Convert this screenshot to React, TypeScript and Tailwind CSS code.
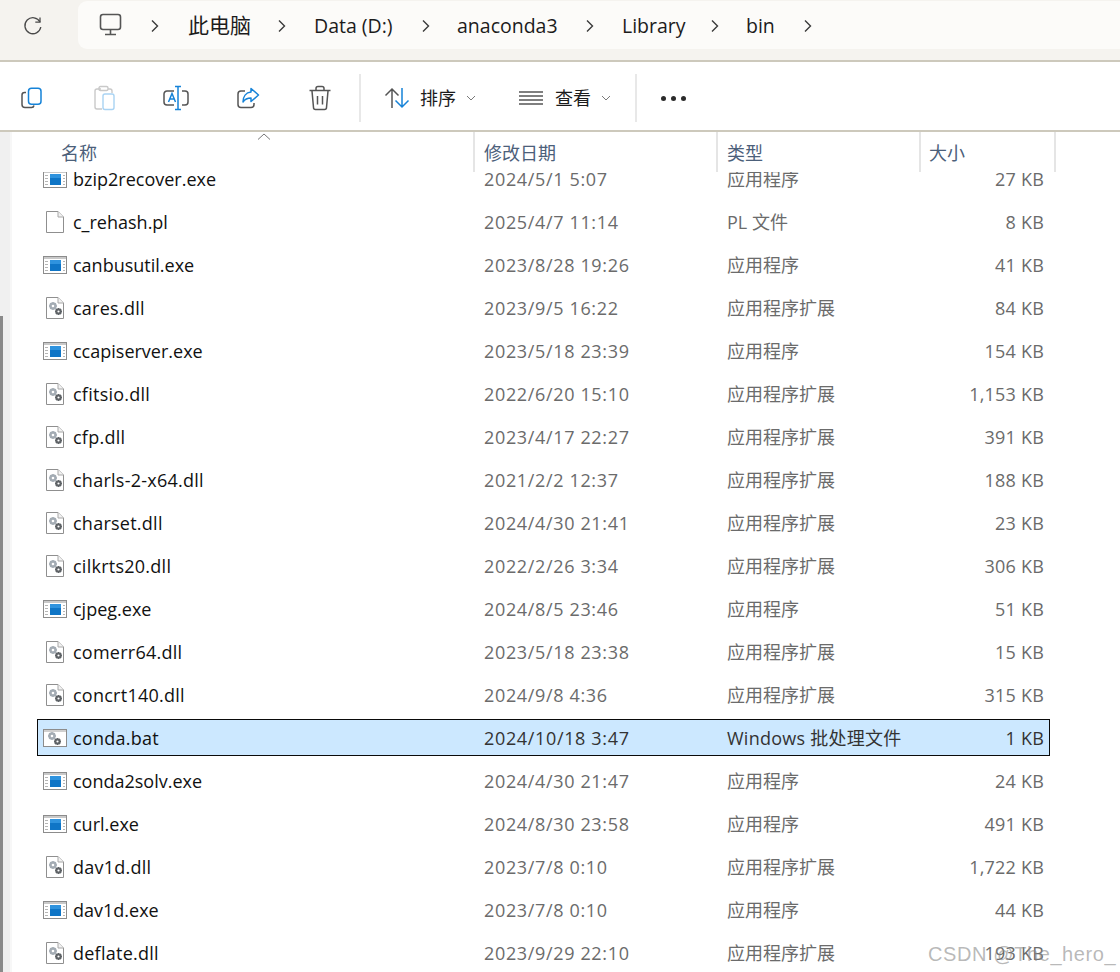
import type { ReactNode } from "react";

const FONT = "font-['Open_Sans','Noto_Sans_CJK_SC',sans-serif]";

type Kind = "exe" | "dll" | "file" | "bat";

interface Row {
  name: string;
  date: string;
  type: string;
  size: string;
  kind: Kind;
}

const EXE = "应用程序";
const DLL = "应用程序扩展";

const rows: Row[] = [
  { name: "bzip2recover.exe", date: "2024/5/1 5:07", type: EXE, size: "27 KB", kind: "exe" },
  { name: "c_rehash.pl", date: "2025/4/7 11:14", type: "PL 文件", size: "8 KB", kind: "file" },
  { name: "canbusutil.exe", date: "2023/8/28 19:26", type: EXE, size: "41 KB", kind: "exe" },
  { name: "cares.dll", date: "2023/9/5 16:22", type: DLL, size: "84 KB", kind: "dll" },
  { name: "ccapiserver.exe", date: "2023/5/18 23:39", type: EXE, size: "154 KB", kind: "exe" },
  { name: "cfitsio.dll", date: "2022/6/20 15:10", type: DLL, size: "1,153 KB", kind: "dll" },
  { name: "cfp.dll", date: "2023/4/17 22:27", type: DLL, size: "391 KB", kind: "dll" },
  { name: "charls-2-x64.dll", date: "2021/2/2 12:37", type: DLL, size: "188 KB", kind: "dll" },
  { name: "charset.dll", date: "2024/4/30 21:41", type: DLL, size: "23 KB", kind: "dll" },
  { name: "cilkrts20.dll", date: "2022/2/26 3:34", type: DLL, size: "306 KB", kind: "dll" },
  { name: "cjpeg.exe", date: "2024/8/5 23:46", type: EXE, size: "51 KB", kind: "exe" },
  { name: "comerr64.dll", date: "2023/5/18 23:38", type: DLL, size: "15 KB", kind: "dll" },
  { name: "concrt140.dll", date: "2024/9/8 4:36", type: DLL, size: "315 KB", kind: "dll" },
  { name: "conda.bat", date: "2024/10/18 3:47", type: "Windows 批处理文件", size: "1 KB", kind: "bat" },
  { name: "conda2solv.exe", date: "2024/4/30 21:47", type: EXE, size: "24 KB", kind: "exe" },
  { name: "curl.exe", date: "2024/8/30 23:58", type: EXE, size: "491 KB", kind: "exe" },
  { name: "dav1d.dll", date: "2023/7/8 0:10", type: DLL, size: "1,722 KB", kind: "dll" },
  { name: "dav1d.exe", date: "2023/7/8 0:10", type: EXE, size: "44 KB", kind: "exe" },
  { name: "deflate.dll", date: "2023/9/29 22:10", type: DLL, size: "193 KB", kind: "dll" },
];

function Gears({ x, y }: { x: number; y: number }) {
  return (
    <g transform={`translate(${x} ${y})`}>
      <circle cx="4" cy="4" r="2.5" fill="none" stroke="#a4acb4" strokeWidth="2.4" />
      <path d="M4 0v1.5M4 6.5V8M0 4h1.5M6.5 4H8M1.2 1.2l1 1M5.8 5.8l1 1M6.8 1.2l-1 1M2.2 5.8l-1 1" stroke="#a4acb4" strokeWidth="1.3" />
      <circle cx="9.5" cy="9.5" r="2.2" fill="none" stroke="#5f6367" strokeWidth="2.2" />
      <path d="M9.5 6v1.4M9.5 11.6V13M6 9.5h1.4M11.6 9.5H13M7 7l1 1M11 11l1 1M12 7l-1 1M8 11l-1 1" stroke="#5f6367" strokeWidth="1.1" />
    </g>
  );
}

function FileIcon({ kind }: { kind: Kind }) {
  if (kind === "exe") {
    return (
      <svg width="24" height="18" viewBox="0 0 24 18" className="shrink-0">
        <rect x="0.5" y="0.5" width="23" height="17" fill="#fff" stroke="#8c8c8c" />
        <rect x="1" y="1" width="22" height="2" fill="#c9c9c9" />
        <path d="M2 5.5h3M2 8.5h3M2 11.5h3M2 14.5h3M20 5.5h2M20 8.5h2M20 11.5h2M20 14.5h2" stroke="#b5b5b5" />
        <rect x="7" y="4" width="11" height="11" fill="#0f75c6" />
        <rect x="7" y="4" width="11" height="4" fill="#2f93de" />
      </svg>
    );
  }
  if (kind === "bat") {
    return (
      <svg width="24" height="18" viewBox="0 0 24 18" className="shrink-0">
        <rect x="0.5" y="0.5" width="23" height="17" fill="#fff" stroke="#8c8c8c" />
        <rect x="1" y="1" width="22" height="2" fill="#d0d0d0" />
        <Gears x={5} y={3} />
      </svg>
    );
  }
  return (
    <svg width="18" height="22" viewBox="0 0 18 22" className="shrink-0">
      <path d="M0.5 0.5H12L17.5 6V21.5H0.5Z" fill="#fff" stroke="#8f8f8f" />
      <path d="M12 0.5V6H17.5" fill="#f2f2f2" stroke="#a8a8a8" />
      {kind === "dll" && <Gears x={3} y={5} />}
    </svg>
  );
}

function Chevron({ className }: { className: string }) {
  return (
    <svg width="10" height="14" viewBox="0 0 10 14" className={`shrink-0 ${className}`}>
      <path d="M2 1.5 7.5 7 2 12.5" fill="none" stroke="#3a3a3a" strokeWidth="1.4" />
    </svg>
  );
}

function Crumb({ children, className }: { children: ReactNode; className: string }) {
  return <span className={`shrink-0 whitespace-nowrap ${className}`}>{children}</span>;
}

function AddressBar() {
  return (
    <div className="flex h-[60px] shrink-0 items-start bg-[#f5f3ef]">
      <div className="flex h-[50px] w-[78px] items-center justify-center pr-[12px]">
        <svg width="22" height="22" viewBox="0 0 22 22" fill="none" stroke="#4a4a4a" strokeWidth="1.3">
          <path d="M18 3.5V8.2H13.3" />
          <path d="M18 8a8 8 0 1 0 .8 5" />
        </svg>
      </div>
      <div className="mt-px flex h-[48px] flex-1 items-center rounded-l-[9px] bg-[#fcfbf9] pl-[21px] pt-[2px] text-[19.5px] text-[#1c1c1c]">
        <svg width="24" height="24" viewBox="0 0 24 24" fill="none" stroke="#555" strokeWidth="1.6" className="-mt-[2px] shrink-0">
          <rect x="1.5" y="1.5" width="20" height="15" rx="2.5" />
          <path d="M11.5 17v4M6 21.5h11" />
        </svg>
        <Chevron className="ml-[27px]" />
        <Crumb className="ml-[28px] w-[64px] text-[21px]">此电脑</Crumb>
        <Chevron className="ml-[25px]" />
        <Crumb className="ml-[27px] w-[80px]">Data (D:)</Crumb>
        <Chevron className="ml-[27px]" />
        <Crumb className="ml-[26px] w-[101px]">anaconda3</Crumb>
        <Chevron className="ml-[27px]" />
        <Crumb className="ml-[27px] w-[62px]">Library</Crumb>
        <Chevron className="ml-[26px]" />
        <Crumb className="ml-[26px] w-[29px]">bin</Crumb>
        <Chevron className="ml-[28px]" />
      </div>
    </div>
  );
}

function ToolSlot({ children }: { children: ReactNode }) {
  return <div className="flex w-[72px] shrink-0 items-center justify-center">{children}</div>;
}

function SmallCaret() {
  return (
    <svg width="10" height="6" viewBox="0 0 10 6" className="shrink-0">
      <path d="M1 1l4 4 4-4" fill="none" stroke="#7a7a7a" />
    </svg>
  );
}

function Toolbar() {
  return (
    <div className="flex h-[72px] shrink-0 items-center border-y-2 border-[#cdc9bc] bg-white pt-[4px] text-[18px] text-[#1c1c1c]">
      <div className="ml-[-4px] flex h-full items-center">
        <ToolSlot>
          <svg width="24" height="24" viewBox="0 0 24 24" fill="none" strokeWidth="1.5">
            <path d="M6 6.5H4.5A2.5 2.5 0 0 0 2 9v9.5A3 3 0 0 0 5 21.5h6.5a2.5 2.5 0 0 0 2.5-2" stroke="#555" />
            <rect x="8.5" y="2.2" width="12.5" height="16" rx="3" stroke="#1683d8" />
          </svg>
        </ToolSlot>
        <ToolSlot>
          <svg width="24" height="26" viewBox="0 0 24 26" fill="none" strokeWidth="1.4">
            <path d="M9 4H5a2 2 0 0 0-2 2v16a2 2 0 0 0 2 2h5" stroke="#c9c9c9" />
            <path d="M16 4h2a2 2 0 0 1 2 2v2" stroke="#c9c9c9" />
            <rect x="7" y="1.5" width="9" height="4" rx="1.5" stroke="#c9c9c9" />
            <rect x="11" y="9" width="11" height="15.5" rx="2" stroke="#a9d3f3" />
          </svg>
        </ToolSlot>
        <ToolSlot>
          <svg width="26" height="26" viewBox="0 0 26 26" fill="none" strokeWidth="1.5">
            <path d="M11 6H4a3 3 0 0 0-3 3v8a3 3 0 0 0 3 3h7M19 6h3a3 3 0 0 1 3 3v8a3 3 0 0 1-3 3h-3" stroke="#555" />
            <path d="M15 2v22M12 1.5h6M12 24.5h6" stroke="#1683d8" />
            <path d="M5.5 17 9 8.5l3.5 8.5M6.8 14h4.4" stroke="#1683d8" />
          </svg>
        </ToolSlot>
        <ToolSlot>
          <svg width="24" height="24" viewBox="0 0 24 24" fill="none" strokeWidth="1.5">
            <path d="M9 5H5a3 3 0 0 0-3 3v10.5a3 3 0 0 0 3 3h10a3 3 0 0 0 3-3V17" stroke="#555" />
            <path d="M15 2.5 22.5 9 15 15.5V12c-4 0-6 1-8 4 0-5.5 3-9.5 8-10Z" stroke="#1683d8" strokeLinejoin="round" />
          </svg>
        </ToolSlot>
        <ToolSlot>
          <svg width="24" height="26" viewBox="0 0 24 26" fill="none" stroke="#555" strokeWidth="1.5">
            <path d="M1.5 5.5h21M8 5.5V3.5A2 2 0 0 1 10 1.5h4a2 2 0 0 1 2 2v2" />
            <path d="M4 6l1.5 16.5A2 2 0 0 0 7.5 24.5h9a2 2 0 0 0 2-2L20 6" />
            <path d="M9.5 11v8.5M14.5 11v8.5" />
          </svg>
        </ToolSlot>
      </div>
      <div className="ml-[3px] h-[48px] w-[2px] bg-[#e8e8e8]" />
      <svg width="26" height="24" viewBox="0 0 26 24" fill="none" strokeWidth="1.5" className="ml-[23px]">
        <path d="M8 22V3M1.5 9.5 8 3l6.5 6.5" stroke="#555" />
        <path d="M18 2v19M11.5 14.5 18 21l6.5-6.5" stroke="#1683d8" />
      </svg>
      <span className="ml-[10px]">排序</span>
      <span className="ml-[10px]"><SmallCaret /></span>
      <svg width="24" height="16" viewBox="0 0 24 16" fill="none" stroke="#555" strokeWidth="1.3" className="ml-[43px]">
        <path d="M0 2h24M0 6h24M0 10h24M0 14h24" />
      </svg>
      <span className="ml-[12px]">查看</span>
      <span className="ml-[10px]"><SmallCaret /></span>
      <div className="ml-[24px] h-[48px] w-[2px] bg-[#e8e8e8]" />
      <div className="ml-[24px] flex gap-[5px]">
        <span className="size-[5px] rounded-full bg-[#2b2b2b]" />
        <span className="size-[5px] rounded-full bg-[#2b2b2b]" />
        <span className="size-[5px] rounded-full bg-[#2b2b2b]" />
      </div>
    </div>
  );
}

function HeaderCell({ label, className }: { label: string; className: string }) {
  return (
    <div className={`flex h-full shrink-0 items-center border-r-2 border-[#e5e5e5] pt-[2px] ${className}`}>
      {label}
    </div>
  );
}

function ColumnHeader() {
  return (
    <div className="relative z-10 flex h-[40px] bg-white text-[18px] text-[#4c607a]">
      <HeaderCell label="名称" className="w-[463px] pl-[49px]" />
      <HeaderCell label="修改日期" className="w-[243px] pl-[9px]" />
      <HeaderCell label="类型" className="w-[203px] pl-[9px]" />
      <HeaderCell label="大小" className="w-[135px] pl-[8px]" />
      <svg width="14" height="8" viewBox="0 0 14 8" className="absolute left-[245px] top-px">
        <path d="M1 6.5 7 1l6 5.5" fill="none" stroke="#777" />
      </svg>
    </div>
  );
}

function FileRow({ row }: { row: Row }) {
  const selected = row.name === "conda.bat";
  const muted = selected ? "text-[#333]" : "text-[#6b6b6b]";
  return (
    <div
      className={`flex h-[37px] w-[1013px] shrink-0 items-center border ${
        selected ? "border-[#0a0a0a] bg-[#cce8ff]" : "border-transparent"
      }`}
    >
      <div className="mr-px flex w-[34px] shrink-0 justify-center">
        <FileIcon kind={row.kind} />
      </div>
      <div
        className={`w-[411px] shrink-0 truncate pt-[2px] text-[#111] ${
          row.kind === "dll" || row.kind === "bat" ? "tracking-[0.25px]" : ""
        }`}
      >
        {row.name}
      </div>
      <div className={`w-[243px] shrink-0 pt-[2px] tracking-[0.65px] ${muted}`}>{row.date}</div>
      <div className={`w-[220px] shrink-0 pt-[2px] ${selected ? "tracking-[0.25px]" : ""} ${muted}`}>{row.type}</div>
      <div className={`w-[97px] shrink-0 pt-[2px] text-right tracking-[0.2px] ${muted}`}>{row.size}</div>
    </div>
  );
}

export default function App() {
  return (
    <div className={`relative flex h-[972px] w-[1120px] flex-col overflow-hidden bg-white ${FONT}`}>
      <AddressBar />
      <Toolbar />
      <div className="flex min-h-0 flex-1">
        <div className="relative w-[12px] shrink-0 border-r-2 border-[#f7f7f7] bg-[#f0f0f0]">
          <div className="absolute bottom-0 left-0 top-[184px] w-[3px] bg-[#8a8a8a]" />
        </div>
        <div className="min-w-0 flex-1">
          <ColumnHeader />
          <div className="-mt-[12px] ml-[25px] flex flex-col gap-[6px] text-[18px]">
            {rows.map((row) => (
              <FileRow key={row.name} row={row} />
            ))}
          </div>
        </div>
      </div>
      <div className="absolute left-[928px] top-[939px] z-20 whitespace-nowrap font-['Liberation_Sans',sans-serif] text-[20px] tracking-[0.6px] text-[#8a8a8a]/60">
        CSDN @The_hero_
      </div>
    </div>
  );
}
